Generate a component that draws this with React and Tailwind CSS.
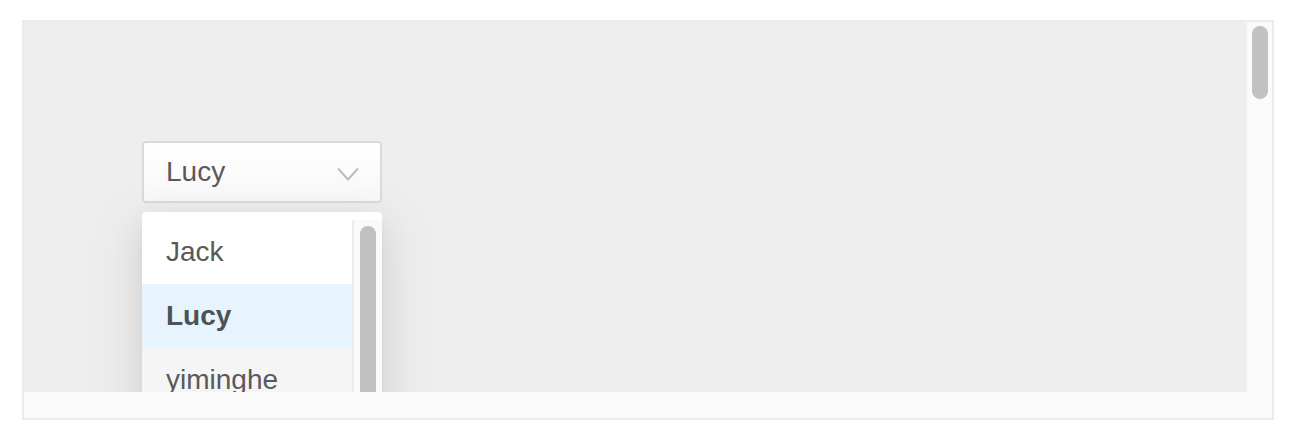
export default function App() {
  const font = { fontFamily: '"Liberation Sans", Arial, Helvetica, sans-serif' };
  return (
    <div className="w-[1316px] h-[446px] bg-white pt-[20px] pl-[22px]" style={font}>
      <div className="w-[1252px] h-[400px] border-2 border-[#ebebeb] bg-[#fafafa] grid grid-cols-[1222px_26px] grid-rows-[370px_26px]">
        <div className="bg-[#eeeeee] overflow-hidden pl-[118px] pt-[119px]">
          <div className="w-[240px] h-[62px] border-2 border-[#dadada] rounded-[4px] bg-gradient-to-b from-white to-[#f8f8f8] flex items-center pl-[22px] pr-[21px]">
            <span className="text-[28px] leading-none text-[#595959] flex-1">Lucy</span>
            <svg width="22" height="14" viewBox="0 0 22 14" className="mt-[3px]">
              <polyline points="1,1.5 11,12.5 21,1.5" fill="none" stroke="#bdbdbd" strokeWidth="2" />
            </svg>
          </div>
          <div className="mt-[9px] w-[240px] h-[300px] bg-white rounded-[4px] pt-[8px] shadow-[0_12px_32px_rgba(0,0,0,0.08),0_6px_12px_-8px_rgba(0,0,0,0.12),0_18px_56px_16px_rgba(0,0,0,0.05)] flex">
            <div className="w-[210px] flex flex-col text-[28px]">
              <div className="h-[64px] flex items-center px-[24px] text-[#595959]">Jack</div>
              <div className="h-[64px] flex items-center px-[24px] bg-[#e8f4fd] text-[#4d5257] font-bold">Lucy</div>
              <div className="h-[64px] flex items-center px-[24px] bg-[#f5f5f5] text-[#595959]">yiminghe</div>
              <div className="h-[64px] flex items-center px-[24px] text-[#595959]">Tom</div>
            </div>
            <div className="w-[30px] border-l-2 border-[#ececec] bg-[#fafafa] pl-[6px] pt-[6px]">
              <div className="w-[16px] h-[240px] rounded-full bg-[#c1c1c1]"></div>
            </div>
          </div>
        </div>
        <div className="row-span-1 border-l border-[#f0f0f0] pl-[5px] pt-[4px]">
          <div className="w-[16px] h-[73px] rounded-full bg-[#c1c1c1]"></div>
        </div>
        <div className="col-span-2"></div>
      </div>
    </div>
  );
}
